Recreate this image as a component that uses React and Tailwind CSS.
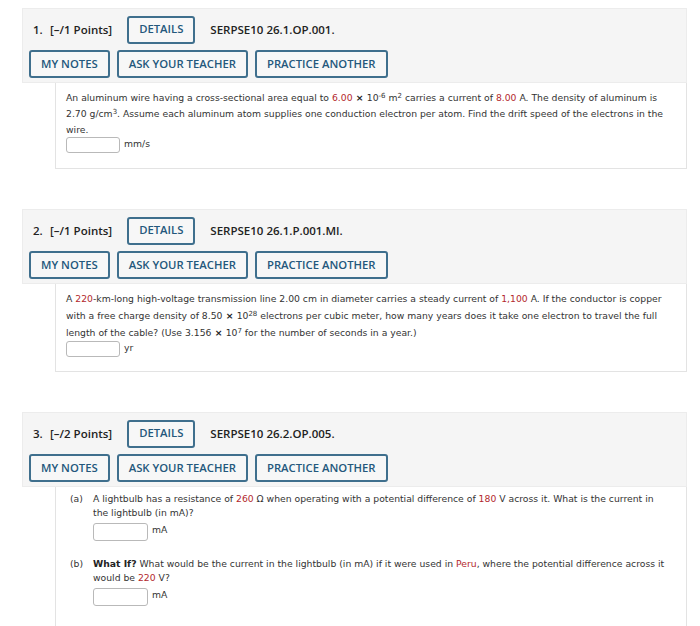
const Red = ({ children }) => <span className="text-[#b3282d]">{children}</span>;
const Times = () => <span className="font-bold text-[#222]"> × </span>;
const Sup = ({ children }) => <sup className="text-[7px]">{children}</sup>;

const Btn = ({ children }) => (
  <button className="h-[28px] px-[10px] border-2 border-[#3f6f8d] rounded-[3px] text-[#24587c] text-[11.3px] font-semibold bg-[#f7f7f7]">
    {children}
  </button>
);

const Answer = ({ unit, tall }) => (
  <div className="flex items-start gap-[4px]">
    <div className={tall ? 'w-[55px] h-[18px] border border-[#b9b9b9] rounded-[3px] bg-white' : 'w-[54px] h-[16px] border border-[#b9b9b9] rounded-[3px] bg-white'} />
    <span className="leading-[13px]">{unit}</span>
  </div>
);

const Card = ({ num, points, code, children }) => (
  <div className="mb-[40px]">
    <div className="bg-[#f5f5f5] border border-[#ececec] px-[6px] pt-[7px] pb-[4px] font-['Open_Sans',sans-serif]">
      <div className="flex items-center h-[27px] pl-[4px]">
        <span className="text-[11.5px] font-semibold text-[#222] w-[17px]">{num}.</span>
        <span className="text-[11.5px] font-semibold text-[#222]">{points}</span>
        <span className="ml-[15px]">
          <Btn>DETAILS</Btn>
        </span>
        <span className="ml-[15px] text-[11.5px] font-semibold text-[#222]">{code}</span>
      </div>
      <div className="flex gap-[7px] mt-[7px]">
        <Btn>MY NOTES</Btn>
        <Btn>ASK YOUR TEACHER</Btn>
        <Btn>PRACTICE ANOTHER</Btn>
      </div>
    </div>
    <div className="ml-[33px] border border-t-0 border-[#e3e3e3] bg-white font-['DejaVu_Sans',Verdana,sans-serif] text-[9.25px] text-[#333]">
      {children}
    </div>
  </div>
);

export default function App() {
  return (
    <div className="bg-white pt-[8px] pl-[22px] pr-[13px] overflow-hidden h-[626px]">
      <Card num="1" points="[–/1 Points]" code="SERPSE10 26.1.OP.001.">
        <div className="px-[10px] pt-[7px] pb-[15px]">
          <p className="leading-[16px]">
            An aluminum wire having a cross-sectional area equal to <Red>6.00</Red>
            <Times />
            10<Sup>-6</Sup> m<Sup>2</Sup> carries a current of <Red>8.00</Red> A. The density of aluminum is 2.70 g/cm<Sup>3</Sup>. Assume each aluminum atom supplies one conduction electron per atom. Find the drift speed of the electrons in the wire.
          </p>
          <div className="-mt-[1px]">
            <Answer unit="mm/s" />
          </div>
        </div>
      </Card>

      <Card num="2" points="[–/1 Points]" code="SERPSE10 26.1.P.001.MI.">
        <div className="px-[10px] pt-[6px] pb-[14px]">
          <p className="leading-[17px]">
            A <Red>220</Red>-km-long high-voltage transmission line 2.00 cm in diameter carries a steady current of <Red>1,100</Red> A. If the conductor is copper with a free charge density of 8.50
            <Times />
            10<Sup>28</Sup> electrons per cubic meter, how many years does it take one electron to travel the full length of the cable? (Use 3.156
            <Times />
            10<Sup>7</Sup> for the number of seconds in a year.)
          </p>
          <div>
            <Answer unit="yr" />
          </div>
        </div>
      </Card>

      <Card num="3" points="[–/2 Points]" code="SERPSE10 26.2.OP.005.">
        <div className="pl-[14px] pr-[10px] pt-[5px] pb-[30px]">
          <div className="flex">
            <span className="w-[23px] shrink-0 leading-[14px]">(a)</span>
            <div>
              <p className="leading-[13.5px]">
                A lightbulb has a resistance of <Red>260</Red> Ω when operating with a potential difference of <Red>180</Red> V across it. What is the current in
                <br />
                the lightbulb (in mA)?
              </p>
              <div className="mt-[4px]">
                <Answer unit="mA" tall />
              </div>
            </div>
          </div>
          <div className="flex mt-[16px]">
            <span className="w-[23px] shrink-0 leading-[14px]">(b)</span>
            <div>
              <p className="leading-[13.5px]">
                <b className="text-[#222]">What If?</b> What would be the current in the lightbulb (in mA) if it were used in <Red>Peru</Red>, where the potential difference across it would be <Red>220</Red> V?
              </p>
              <div className="mt-[4px]">
                <Answer unit="mA" tall />
              </div>
            </div>
          </div>
        </div>
      </Card>
    </div>
  );
}
